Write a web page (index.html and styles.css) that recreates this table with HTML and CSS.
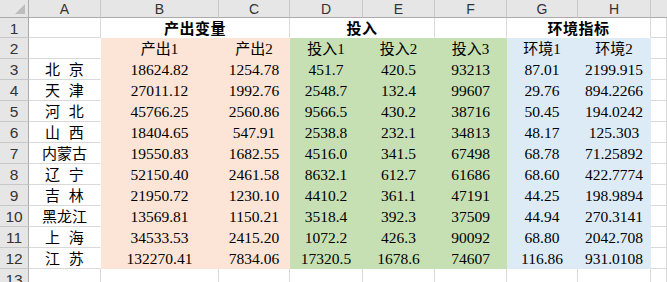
FILE: index.html
```html
<!DOCTYPE html>
<html lang="zh-CN">
<head>
<meta charset="utf-8">
<title>Sheet</title>
<link rel="stylesheet" href="styles.css">
</head>
<body>
<div class="sheet">
  <div class="row hdr">
    <div class="corner"><svg width="12" height="12" viewBox="0 0 12 12"><polygon points="11,1 11,11 1,11" fill="#BDBDBD"/></svg></div>
    <div class="ch">A</div><div class="ch">B</div><div class="ch">C</div><div class="ch">D</div><div class="ch">E</div><div class="ch">F</div><div class="ch">G</div><div class="ch">H</div><div class="ch last"></div>
  </div>
  <div class="row r1">
    <div class="rh">1</div>
    <div class="c"></div>
    <div class="c sp2 nb bold">产出变量</div>
    <div class="c sp2 nb bold">投入</div>
    <div class="c nb"></div>
    <div class="c sp2 nb bold">环境指标</div>
    <div class="c"></div>
  </div>
  <div class="row">
    <div class="rh">2</div>
    <div class="c nr"></div>
    <div class="c pk cj">产出1</div><div class="c pk cj">产出2</div>
    <div class="c gr cj">投入1</div><div class="c gr cj">投入2</div><div class="c gr cj">投入3</div>
    <div class="c bl cj">环境1</div><div class="c bl cj">环境2</div>
    <div class="c"></div>
  </div>
  <div class="row">
    <div class="rh">3</div><div class="c nr nm">北 京</div>
    <div class="c pk">18624.82</div><div class="c pk">1254.78</div>
    <div class="c gr">451.7</div><div class="c gr">420.5</div><div class="c gr">93213</div>
    <div class="c bl">87.01</div><div class="c bl">2199.915</div><div class="c"></div>
  </div>
  <div class="row">
    <div class="rh">4</div><div class="c nr nm">天 津</div>
    <div class="c pk">27011.12</div><div class="c pk">1992.76</div>
    <div class="c gr">2548.7</div><div class="c gr">132.4</div><div class="c gr">99607</div>
    <div class="c bl">29.76</div><div class="c bl">894.2266</div><div class="c"></div>
  </div>
  <div class="row">
    <div class="rh">5</div><div class="c nr nm">河 北</div>
    <div class="c pk">45766.25</div><div class="c pk">2560.86</div>
    <div class="c gr">9566.5</div><div class="c gr">430.2</div><div class="c gr">38716</div>
    <div class="c bl">50.45</div><div class="c bl">194.0242</div><div class="c"></div>
  </div>
  <div class="row">
    <div class="rh">6</div><div class="c nr nm">山 西</div>
    <div class="c pk">18404.65</div><div class="c pk">547.91</div>
    <div class="c gr">2538.8</div><div class="c gr">232.1</div><div class="c gr">34813</div>
    <div class="c bl">48.17</div><div class="c bl">125.303</div><div class="c"></div>
  </div>
  <div class="row">
    <div class="rh">7</div><div class="c nr nm">内蒙古</div>
    <div class="c pk">19550.83</div><div class="c pk">1682.55</div>
    <div class="c gr">4516.0</div><div class="c gr">341.5</div><div class="c gr">67498</div>
    <div class="c bl">68.78</div><div class="c bl">71.25892</div><div class="c"></div>
  </div>
  <div class="row">
    <div class="rh">8</div><div class="c nr nm">辽 宁</div>
    <div class="c pk">52150.40</div><div class="c pk">2461.58</div>
    <div class="c gr">8632.1</div><div class="c gr">612.7</div><div class="c gr">61686</div>
    <div class="c bl">68.60</div><div class="c bl">422.7774</div><div class="c"></div>
  </div>
  <div class="row">
    <div class="rh">9</div><div class="c nr nm">吉 林</div>
    <div class="c pk">21950.72</div><div class="c pk">1230.10</div>
    <div class="c gr">4410.2</div><div class="c gr">361.1</div><div class="c gr">47191</div>
    <div class="c bl">44.25</div><div class="c bl">198.9894</div><div class="c"></div>
  </div>
  <div class="row">
    <div class="rh">10</div><div class="c nr nm">黑龙江</div>
    <div class="c pk">13569.81</div><div class="c pk">1150.21</div>
    <div class="c gr">3518.4</div><div class="c gr">392.3</div><div class="c gr">37509</div>
    <div class="c bl">44.94</div><div class="c bl">270.3141</div><div class="c"></div>
  </div>
  <div class="row">
    <div class="rh">11</div><div class="c nr nm">上 海</div>
    <div class="c pk">34533.53</div><div class="c pk">2415.20</div>
    <div class="c gr">1072.2</div><div class="c gr">426.3</div><div class="c gr">90092</div>
    <div class="c bl">68.80</div><div class="c bl">2042.708</div><div class="c"></div>
  </div>
  <div class="row">
    <div class="rh">12</div><div class="c nr nm">江 苏</div>
    <div class="c pk">132270.41</div><div class="c pk">7834.06</div>
    <div class="c gr">17320.5</div><div class="c gr">1678.6</div><div class="c gr">74607</div>
    <div class="c bl">116.86</div><div class="c bl">931.0108</div><div class="c"></div>
  </div>
  <div class="row">
    <div class="rh">13</div><div class="c"></div>
    <div class="c"></div><div class="c"></div>
    <div class="c"></div><div class="c"></div><div class="c"></div>
    <div class="c"></div><div class="c"></div><div class="c"></div>
  </div>
</div>
</body>
</html>
```
FILE: styles.css
```css
html, body {
  margin: 0;
  padding: 0;
  background: #ffffff;
  overflow: hidden;
}
.sheet {
  width: 667px;
  height: 282px;
  overflow: hidden;
}
.row {
  display: grid;
  grid-template-columns: 29px 72px 118px 71px 73px 72px 72px 71px 73px 1fr;
  height: 21px;
}
.row.hdr { height: 18px; }
.row.r1 { height: 20px; }
.row > div {
  box-sizing: border-box;
  border-right: 1px solid #D9D9D9;
  border-bottom: 1px solid #D9D9D9;
  display: flex;
  align-items: center;
  justify-content: center;
  overflow: hidden;
  white-space: nowrap;
}
.corner {
  background: #E6E6E6;
  border-right-color: #ABABAB !important;
  border-bottom-color: #ABABAB !important;
  justify-content: flex-end !important;
  align-items: flex-end !important;
  padding: 0 2px 2px 0;
}
.corner svg { display: block; }
.ch {
  background: #E6E6E6;
  border-right-color: #C8C8C8 !important;
  border-bottom-color: #ABABAB !important;
  font-family: "Liberation Sans", Arial, sans-serif;
  font-size: 14px;
  color: #333;
  padding-top: 1px;
}
.ch.last { border-right: none; }
.rh {
  background: #E6E6E6;
  border-right-color: #ABABAB !important;
  border-bottom-color: #C8C8C8 !important;
  font-family: "Liberation Sans", Arial, sans-serif;
  font-size: 15.5px;
  color: #333;
  padding-top: 2px;
}
.c {
  font-family: "Liberation Serif", "Times New Roman", "Noto Sans CJK SC", serif;
  font-size: 15.5px;
  line-height: 18px;
  color: #000;
  padding-top: 1px;
}
.cj, .nm {
  font-family: "Liberation Serif", "Noto Sans CJK SC", serif;
  font-size: 15px;
}
.nm { word-spacing: 5px; }
.sp2 { grid-column: span 2; }
.bold {
  font-family: "Noto Sans CJK SC", sans-serif;
  font-weight: 700;
  font-size: 15px;
  line-height: 17px;
  letter-spacing: 0.5px;
}
.r1 > .c { align-items: flex-end; padding-top: 0; padding-bottom: 1px; }
.nb { border-bottom-color: transparent !important; }
.nr { border-right-color: transparent !important; }
.pk { background: #FCE4D6; border-color: #FCE4D6 !important; }
.gr { background: #C6E0B4; border-color: #C6E0B4 !important; }
.bl { background: #DDEBF7; border-color: #DDEBF7 !important; }
```
